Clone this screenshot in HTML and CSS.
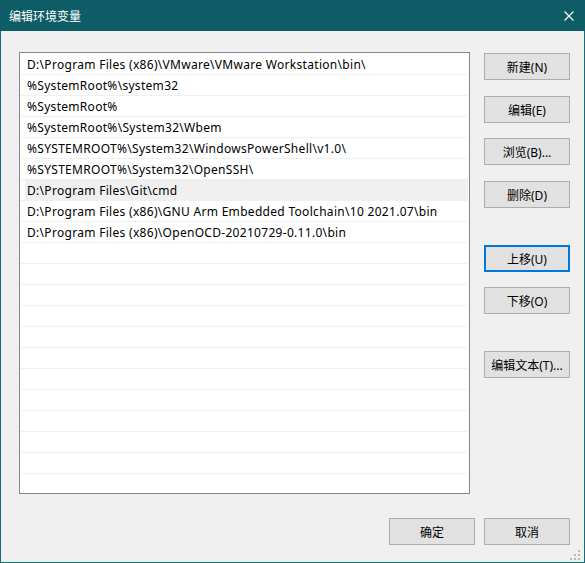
FILE: index.html
```html
<!DOCTYPE html>
<html lang="zh-CN">
  <head>
    <meta charset="UTF-8" />
    <meta name="viewport" content="width=device-width, initial-scale=1.0" />
    <title>编辑环境变量</title>
    <link rel="stylesheet" href="styles.css">
  </head>
  <body>
    <div class="window">
      <!-- 标题栏 -->
      <div class="titlebar">
        <span class="title">编辑环境变量</span>
        <span class="close">
          <svg width="10" height="10" viewBox="0 0 10 10">
            <path d="M0.5 0.5 L9.5 9.5 M9.5 0.5 L0.5 9.5" stroke="#fff" stroke-width="1.1" />
          </svg>
        </span>
      </div>

      <div class="content">
        <div class="main">
          <!-- 路径列表 -->
          <ul class="pathlist">
            <li>D:\Program Files (x86)\VMware\VMware Workstation\bin\</li>
            <li>%SystemRoot%\system32</li>
            <li>%SystemRoot%</li>
            <li>%SystemRoot%\System32\Wbem</li>
            <li>%SYSTEMROOT%\System32\WindowsPowerShell\v1.0\</li>
            <li>%SYSTEMROOT%\System32\OpenSSH\</li>
            <li class="hot">D:\Program Files\Git\cmd</li>
            <li>D:\Program Files (x86)\GNU Arm Embedded Toolchain\10 2021.07\bin</li>
            <li>D:\Program Files (x86)\OpenOCD-20210729-0.11.0\bin</li>
            <li></li>
            <li></li>
            <li></li>
            <li></li>
            <li></li>
            <li></li>
            <li></li>
            <li></li>
            <li></li>
            <li></li>
            <li></li>
            <li></li>
          </ul>

          <!-- 右侧操作按钮 -->
          <div class="actions">
            <button class="btn">新建(N)</button>
            <button class="btn gap16">编辑(E)</button>
            <button class="btn gap15">浏览(B)...</button>
            <button class="btn gap16">删除(D)</button>
            <button class="btn focus gap-big">上移(U)</button>
            <button class="btn gap15">下移(O)</button>
            <button class="btn gap-big">编辑文本(T)...</button>
          </div>
        </div>

        <div class="footer">
          <button class="btn">确定</button>
          <button class="btn">取消</button>
        </div>
      </div>

      <!-- 右下角拖拽点 -->
      <svg class="grip" width="12" height="10" viewBox="0 0 12 10">
        <rect x="8" y="0" width="2" height="2" fill="#b9b9b9" />
        <rect x="4" y="4" width="2" height="2" fill="#b9b9b9" />
        <rect x="8" y="4" width="2" height="2" fill="#b9b9b9" />
        <rect x="0" y="8" width="2" height="2" fill="#b9b9b9" />
        <rect x="4" y="8" width="2" height="2" fill="#b9b9b9" />
        <rect x="8" y="8" width="2" height="2" fill="#b9b9b9" />
      </svg>
    </div>
  </body>
</html>
```

FILE: styles.css
```css
* {
  box-sizing: border-box;
}
body {
  margin: 0;
  font-family: "Noto Sans", "Noto Sans CJK SC", sans-serif;
  font-size: 12px;
  color: #000;
}
.window {
  position: relative;
  width: 585px;
  height: 563px;
  border: 1px solid #1a6b78;
  border-top: none;
  background: #f0f0f0;
  display: flex;
  flex-direction: column;
}
.titlebar {
  height: 31px;
  margin: 0 -1px;
  background: #0e5c66;
  display: flex;
  align-items: center;
  justify-content: space-between;
  padding: 0 11px 1px 9px;
}
.title {
  color: #fff;
  font-family: "Noto Sans CJK SC", sans-serif;
  font-size: 12px;
}
.close {
  display: flex;
  width: 10px;
  height: 10px;
  margin-top: 1px;
}
.content {
  flex: 1;
  padding: 21px 14px 0 18px;
}
.main {
  display: flex;
  gap: 14px;
}
.pathlist {
  list-style: none;
  margin: 0;
  padding: 1px 1px 0;
  width: 451px;
  height: 442px;
  background: #fff;
  border: 1px solid #828790;
  overflow: hidden;
}
.pathlist li {
  height: 21px;
  line-height: 22px;
  padding-left: 4px;
  border-bottom: 1px solid #f0f0f0;
  white-space: nowrap;
  text-indent: 2px;
  letter-spacing: 0.3px;
}
.pathlist li.hot {
  background: #f0f0f0;
  background-clip: content-box;
}
.actions {
  display: flex;
  flex-direction: column;
  padding-top: 1px;
}
.btn {
  width: 86px;
  height: 27px;
  padding: 0;
  background: #e1e1e1;
  border: 1px solid #adadad;
  font-family: "Noto Sans", "Noto Sans CJK SC", sans-serif;
  font-size: 12px;
  color: #000;
}
.gap15 {
  margin-top: 15px;
}
.gap16 {
  margin-top: 16px;
}
.gap-big {
  margin-top: 37px;
}
.focus {
  border: 2px solid #0078d7;
}
.footer {
  display: flex;
  justify-content: flex-end;
  gap: 9px;
  margin-top: 24px;
}
.grip {
  position: absolute;
  right: 2px;
  bottom: 2px;
}
```
